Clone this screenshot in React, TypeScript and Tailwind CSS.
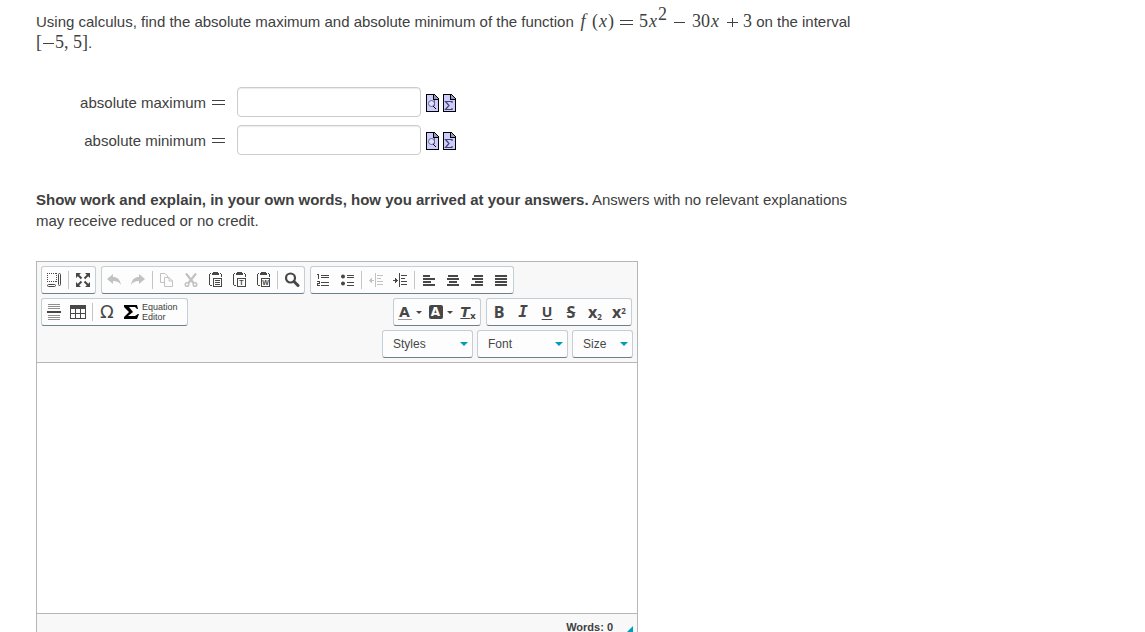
import { useState } from "react";
import type { ReactNode } from "react";
import clsx from "clsx";

const Icon = ({ children, smooth }: { children: ReactNode; smooth?: boolean }) => (
	<svg width="16" height="16" viewBox="0 0 16 16" fill="currentColor" shapeRendering={smooth ? "auto" : "crispEdges"} aria-hidden="true">
		{children}
	</svg>
);

const Lines = ({ rows }: { rows: number[][] }) => (
	<Icon>
		{rows.map(([x, y, w, h]) => (
			<rect key={`${x}-${y}`} x={x} y={y} width={w} height={h}/>
		))}
	</Icon>
);

const Paste = ({ children }: { children: ReactNode }) => (
	<Icon>
		<path d="M6 0h5v1h1v2H5V1h1z"/>
		<path d="M3 1h1v1H3v11h2v1H3v-1H2V2h1zM13 1h1v1h1v3h-1V2h-1z"/>
		<path d="M6 6h9v9H6zM7 7v7h7V7z" fillRule="evenodd"/>
		{children}
	</Icon>
);

function Tool({ label, disabled, wide, children }: { label: string; disabled?: boolean; wide?: boolean; children: ReactNode }) {
	return (
		<button
			type="button"
			aria-label={label}
			title={label}
			disabled={disabled}
			className={clsx("h-6 flex items-center justify-center text-[#474747] disabled:text-[#c2c2c2]", wide ? "w-[31px]" : "w-6")}
		>
			{children}
		</button>
	);
}

const Group = ({ children }: { children: ReactNode }) => (
	<div role="group" className="h-7 flex items-center rounded-[3px] border border-[#c3ced5] border-b-[#6b7f8c] bg-[#fdfdfd]">
		{children}
	</div>
);

const Separator = () => <span className="w-px h-[18px] mx-0.5 bg-[#c4c4c4]"/>;

const Caret = () => (
	<svg width="6" height="3" viewBox="0 0 6 3" fill="currentColor" aria-hidden="true">
		<path d="M0 0h6L3 3z"/>
	</svg>
);

function Combo({ label, wide }: { label: string; wide?: boolean }) {
	return (
		<div className={clsx("relative h-7", wide ? "w-[91px]" : "w-[61px]")}>
			<select
				aria-label={label}
				className="w-full h-full appearance-none rounded-[3px] border border-[#c3ced5] border-b-[#6b7f8c] bg-[#fdfdfd] pl-2.5 text-xs text-[#474747]"
			>
				<option>{label}</option>
			</select>
			<svg className="absolute right-[5px] top-3 pointer-events-none text-[#009cbf]" width="8" height="4" viewBox="0 0 8 4" fill="currentColor" aria-hidden="true">
				<path d="M0 0h8L4 4z"/>
			</svg>
		</div>
	);
}

function PageIcon({ children }: { children: ReactNode }) {
	return (
		<svg width="13" height="18" viewBox="0 0 13 18" shapeRendering="crispEdges" aria-hidden="true">
			<path d="M0 0h9v1h1v1h1v1h1v1h1v14H0z" fill="#000"/>
			<path d="M1 1h6v5h5v11H1z" fill="#ccccff"/>
			<path d="M8 1h1v1h1v1h1v1h1v1H8z" fill="#9999bb"/>
			{children}
		</svg>
	);
}

function Answer({ id, label }: { id: string; label: string }) {
	return (
		<>
			<label htmlFor={id} className="flex items-center justify-end gap-1.5">
				{label} <Sym char="="/>
			</label>
			<input id={id} type="text" className="h-[30px] w-full rounded border border-[#cccccc] bg-white px-2 shadow-[inset_0_1px_1px_rgba(0,0,0,0.08)]"/>
			<div className="flex gap-1 pt-0.5">
				<button type="button" aria-label="Preview">
					<PageIcon>
						<circle cx="5.500" cy="9.500" r="3" fill="#e0e0ff" stroke="#666688" shapeRendering="auto"/>
						<path d="M8 6h1v6H8z" fill="#666688"/>
						<path d="M7 12h1v1h1v1h1v1H9v-1H8v-1H7z" fill="#000"/>
					</PageIcon>
				</button>
				<button type="button" aria-label="Equation editor">
					<PageIcon>
						<path d="M9 9V7.500H2.500L6 11.500l-3.500 4H9V14" fill="none" stroke="#444466" strokeWidth="1.200" shapeRendering="auto"/>
					</PageIcon>
				</button>
			</div>
		</>
	);
}

// Math operators sit in a fixed cell, so the relation signs get even room
const Sym = ({ char }: { char: string }) => (
	<svg width="13" height="9" viewBox="0 0 13 9" className="inline-block" stroke="currentColor" shapeRendering="crispEdges" role="img" aria-label={char}>
		{char === "=" && <path d="M0 2.5h13M0 6.5h13"/>}
		{char === "−" && <path d="M1 4.5h11"/>}
		{char === "+" && <path d="M1 4.5h11M6.5 0v9"/>}
	</svg>
);

const Var = ({ children }: { children: ReactNode }) => (
	<i className="inline-block w-2.5 text-center leading-none">{children}</i>
);

export default function App() {
	const [text, setText] = useState("");
	const words = text.trim() ? text.trim().split(/\s+/).length : 0;

	return (
		<main className="max-w-[856px] pl-9 pt-[5px] font-['Liberation_Sans',Arial,sans-serif] text-[15px] leading-[21px] text-[#404040]">
			<p>
				Using calculus, find the absolute maximum and absolute minimum of the function{" "}
				<span className="inline-block whitespace-nowrap font-['Liberation_Serif',serif] text-lg leading-[21px] h-[21px]">
					<Var>f</Var>
					<span className="pl-1">(</span><Var>x</Var>)
					<span className="px-1.5"><Sym char="="/></span>
					5<Var>x</Var><span className="inline-block align-[7px] leading-none h-3">2</span>
					<span className="px-1.5"><Sym char="−"/></span>
					30<Var>x</Var>
					<span className="pl-1.5 pr-1"><Sym char="+"/></span>
					3
				</span>{" "}
				on the interval{" "}
				<span className="font-['Liberation_Serif',serif] text-lg leading-none">
					[<Sym char="−"/>5, 5]
				</span>.
			</p>

			<div className="mt-[34px] grid grid-cols-[201px_184px_auto] items-center gap-y-2 [&>label]:pr-3 [&>div]:pl-[5px]">
				<Answer id="maximum" label="absolute maximum"/>
				<Answer id="minimum" label="absolute minimum"/>
			</div>

			<p className="mt-[34px]">
				<strong>Show work and explain, in your own words, how you arrived at your answers.</strong> Answers with no relevant explanations
				may receive reduced or no credit.
			</p>

			<section className="mt-[30px] max-w-[602px] border border-[#b6b6b6] bg-[#f8f8f8]">
				<div role="toolbar" aria-label="Editor" className="flex flex-col gap-1 p-1 border-b border-[#b6b6b6]">
					<div className="flex gap-[5px]">
						<Group>
							<Tool label="Show blocks">
								<Icon>
									<path d="M1.500 1v9M10.500 1v9M1 1.500h10M1 9.500h10" fill="none" stroke="currentColor" strokeDasharray="1 1"/>
									<rect x="1.500" y="12.500" width="8" height="2" rx="1" fill="none" stroke="currentColor" shapeRendering="auto"/>
									<rect x="12.500" y="1.500" width="2" height="12" rx="1" fill="none" stroke="currentColor" shapeRendering="auto"/>
								</Icon>
							</Tool>
							<Separator/>
							<Tool label="Maximize">
								<Icon smooth>
									<path d="M1 1h5L1 6zM15 1v5l-5-5zM1 15v-5l5 5zM15 15h-5l5-5z"/>
									<path d="M2.500 2.500l4 4M13.500 2.500l-4 4M2.500 13.500l4-4M13.500 13.500l-4-4" stroke="currentColor" strokeWidth="2"/>
								</Icon>
							</Tool>
						</Group>
						<Group>
							<Tool label="Undo" disabled>
								<Icon smooth><path d="M1 7l6-5v3c4 0 7 2 8 8-2-3-4-4-8-4v3z"/></Icon>
							</Tool>
							<Tool label="Redo" disabled>
								<Icon smooth><path d="M15 7L9 2v3c-4 0-7 2-8 8 2-3 4-4 8-4v3z"/></Icon>
							</Tool>
							<Separator/>
							<Tool label="Copy" disabled>
								<Icon smooth>
									<path d="M5 10.500H1.500v-9H6L8.500 4v1M5.500 5.500H10l3.500 3.500v5.500h-8zM10 5.500V9h3.500" fill="none" stroke="currentColor"/>
								</Icon>
							</Tool>
							<Tool label="Cut" disabled>
								<Icon smooth>
									<path d="M3 1.500l7.500 9.500M13 1.500L5.500 11" stroke="currentColor" strokeWidth="2.200"/>
									<circle cx="4" cy="12.500" r="1.800" fill="none" stroke="currentColor" strokeWidth="1.500"/>
									<circle cx="12" cy="12.500" r="1.800" fill="none" stroke="currentColor" strokeWidth="1.500"/>
								</Icon>
							</Tool>
							<Tool label="Paste">
								<Paste><path d="M8 8h5v1H8zM8 10h5v1H8zM8 12h5v1H8z"/></Paste>
							</Tool>
							<Tool label="Paste as plain text">
								<Paste><text x="10.500" y="13" textAnchor="middle" fontSize="7" fontWeight="bold">T</text></Paste>
							</Tool>
							<Tool label="Paste from Word">
								<Paste><text x="10.500" y="13" textAnchor="middle" fontSize="7" fontWeight="bold">W</text></Paste>
							</Tool>
							<Separator/>
							<Tool label="Find">
								<Icon smooth>
									<circle cx="6.500" cy="6" r="4.500" fill="none" stroke="currentColor" strokeWidth="2.200"/>
									<path d="M10 9.500l4 4" stroke="currentColor" strokeWidth="3" strokeLinecap="round"/>
								</Icon>
							</Tool>
						</Group>
						<Group>
							<Tool label="Numbered list">
								<Icon>
									<path d="M6 3h8v1H6zM6 5h8v1H6zM6 10h8v1H6zM6 13h8v1H6z"/>
									<path d="M2 2h2v5H3V3H2zM2 9h3v3H3v1h2v1H2v-3h2v-1H2z"/>
								</Icon>
							</Tool>
							<Tool label="Bulleted list">
								<Icon smooth>
									<circle cx="4" cy="4.500" r="2"/><circle cx="4" cy="11.500" r="2"/>
									<path d="M8 3h7v1H8zM8 5h7v1H8zM8 10h7v1H8zM8 13h7v1H8z"/>
								</Icon>
							</Tool>
							<Separator/>
							<Tool label="Decrease indent" disabled>
								<Icon><path d="M7 1h1v14H7zM9 3h6v1H9zM9 6h4v1H9zM9 9h6v1H9zM9 12h6v1H9zM1 8h5v1H1zM2 7h1v3H2zM3 6h1v5H3z"/></Icon>
							</Tool>
							<Tool label="Increase indent">
								<Icon><path d="M7 1h1v14H7zM9 3h6v1H9zM9 6h4v1H9zM9 9h6v1H9zM9 12h6v1H9zM1 8h5v1H1zM4 7h1v3H4zM3 6h1v5H3z"/></Icon>
							</Tool>
							<Separator/>
							<Tool label="Align left"><Lines rows={[[2, 3, 7, 2], [2, 6, 12, 2], [2, 9, 8, 2], [2, 12, 12, 2]]}/></Tool>
							<Tool label="Center"><Lines rows={[[3, 3, 10, 2], [2, 6, 12, 2], [4, 9, 8, 2], [2, 12, 12, 2]]}/></Tool>
							<Tool label="Align right"><Lines rows={[[5, 3, 9, 2], [3, 6, 11, 2], [6, 9, 8, 2], [2, 12, 12, 2]]}/></Tool>
							<Tool label="Justify"><Lines rows={[[2, 3, 12, 2], [2, 6, 12, 2], [2, 9, 12, 2], [2, 12, 12, 2]]}/></Tool>
						</Group>
					</div>

					<div className="flex justify-between pr-px">
						<Group>
							<Tool label="Horizontal line">
								<Icon>
									<path d="M2 0h12v1H2zM2 2h12v1H2zM2 4h12v1H2zM2 11h12v1H2zM2 13h12v1H2zM2 15h12v1H2z" opacity=".6"/>
									<path d="M1 7h14v2H1z"/>
								</Icon>
							</Tool>
							<Tool label="Table">
								<Icon><path fillRule="evenodd" d="M0 1h16v14H0zM1 5v4h4V5zM6 5v4h4V5zM11 5v4h4V5zM1 10v4h4v-4zM6 10v4h4v-4zM11 10v4h4v-4z"/></Icon>
							</Tool>
							<Separator/>
							<Tool label="Special character"><span className="font-['DejaVu_Sans',sans-serif] text-lg">Ω</span></Tool>
							<button type="button" className="flex items-center pl-[5px] pr-[9px] text-left text-[9px] leading-[10px] text-[#404040]">
								<svg width="15" height="14" viewBox="0 0 15 14" className="mr-[3px]" aria-hidden="true">
									<path d="M0 0h13l1 4h-1l-2-2H5l4 5-5 4h7l3-2h1l-2 5H0v-2l5-5-5-5z" fill="#000"/>
								</svg>
								<span>Equation<br/>Editor</span>
							</button>
						</Group>
						<div className="flex gap-[5px]">
							<Group>
								<Tool label="Text color" wide>
									<span className="mr-1 w-3.5 border-b border-[#999999] font-['DejaVu_Sans',sans-serif] text-sm leading-[14px] font-bold">A</span>
									<Caret/>
								</Tool>
								<Tool label="Background color" wide>
									<span className="mr-1 w-3.5 h-3.5 rounded-xs bg-[#474747] font-['DejaVu_Sans',sans-serif] text-xs leading-[14px] font-bold text-white">A</span>
									<Caret/>
								</Tool>
								<Tool label="Remove format">
									<span className="font-['DejaVu_Sans',sans-serif] text-sm leading-none font-bold"><i className="underline">T</i><sub className="text-[9px]">x</sub></span>
								</Tool>
							</Group>
							<Group>
								<Tool label="Bold"><b className="font-['Open_Sans',sans-serif] text-base">B</b></Tool>
								<Tool label="Italic"><i className="font-['DejaVu_Sans_Mono',monospace] text-base font-bold">I</i></Tool>
								<Tool label="Underline"><b className="font-['Open_Sans',sans-serif] text-sm underline underline-offset-2">U</b></Tool>
								<Tool label="Strikethrough"><s className="font-['Open_Sans',sans-serif] text-base font-bold">S</s></Tool>
								<Tool label="Subscript"><span className="font-['Open_Sans',sans-serif] text-base leading-none font-bold">x<sub className="text-[8px]">2</sub></span></Tool>
								<Tool label="Superscript"><span className="font-['Open_Sans',sans-serif] text-base leading-none font-bold">x<sup className="text-[8px]">2</sup></span></Tool>
							</Group>
						</div>
					</div>

					<div className="flex justify-end gap-1">
						<Combo label="Styles" wide/>
						<Combo label="Font" wide/>
						<Combo label="Size"/>
					</div>
				</div>

				<textarea
					aria-label="Explanation"
					value={text}
					onChange={e => setText(e.target.value)}
					className="block w-full h-[250px] resize-none bg-white p-5 outline-none"
				/>

				<div className="flex justify-end gap-3 border-t border-[#b6b6b6] pt-1 pr-1 text-[11px] leading-[18px] font-bold">
					<span>Words: {words}</span>
					<svg width="8" height="8" viewBox="0 0 8 8" className="mt-2" aria-hidden="true">
						<path d="M8 0v8H0z" fill="#009cbf"/>
					</svg>
				</div>
			</section>
		</main>
	);
}
